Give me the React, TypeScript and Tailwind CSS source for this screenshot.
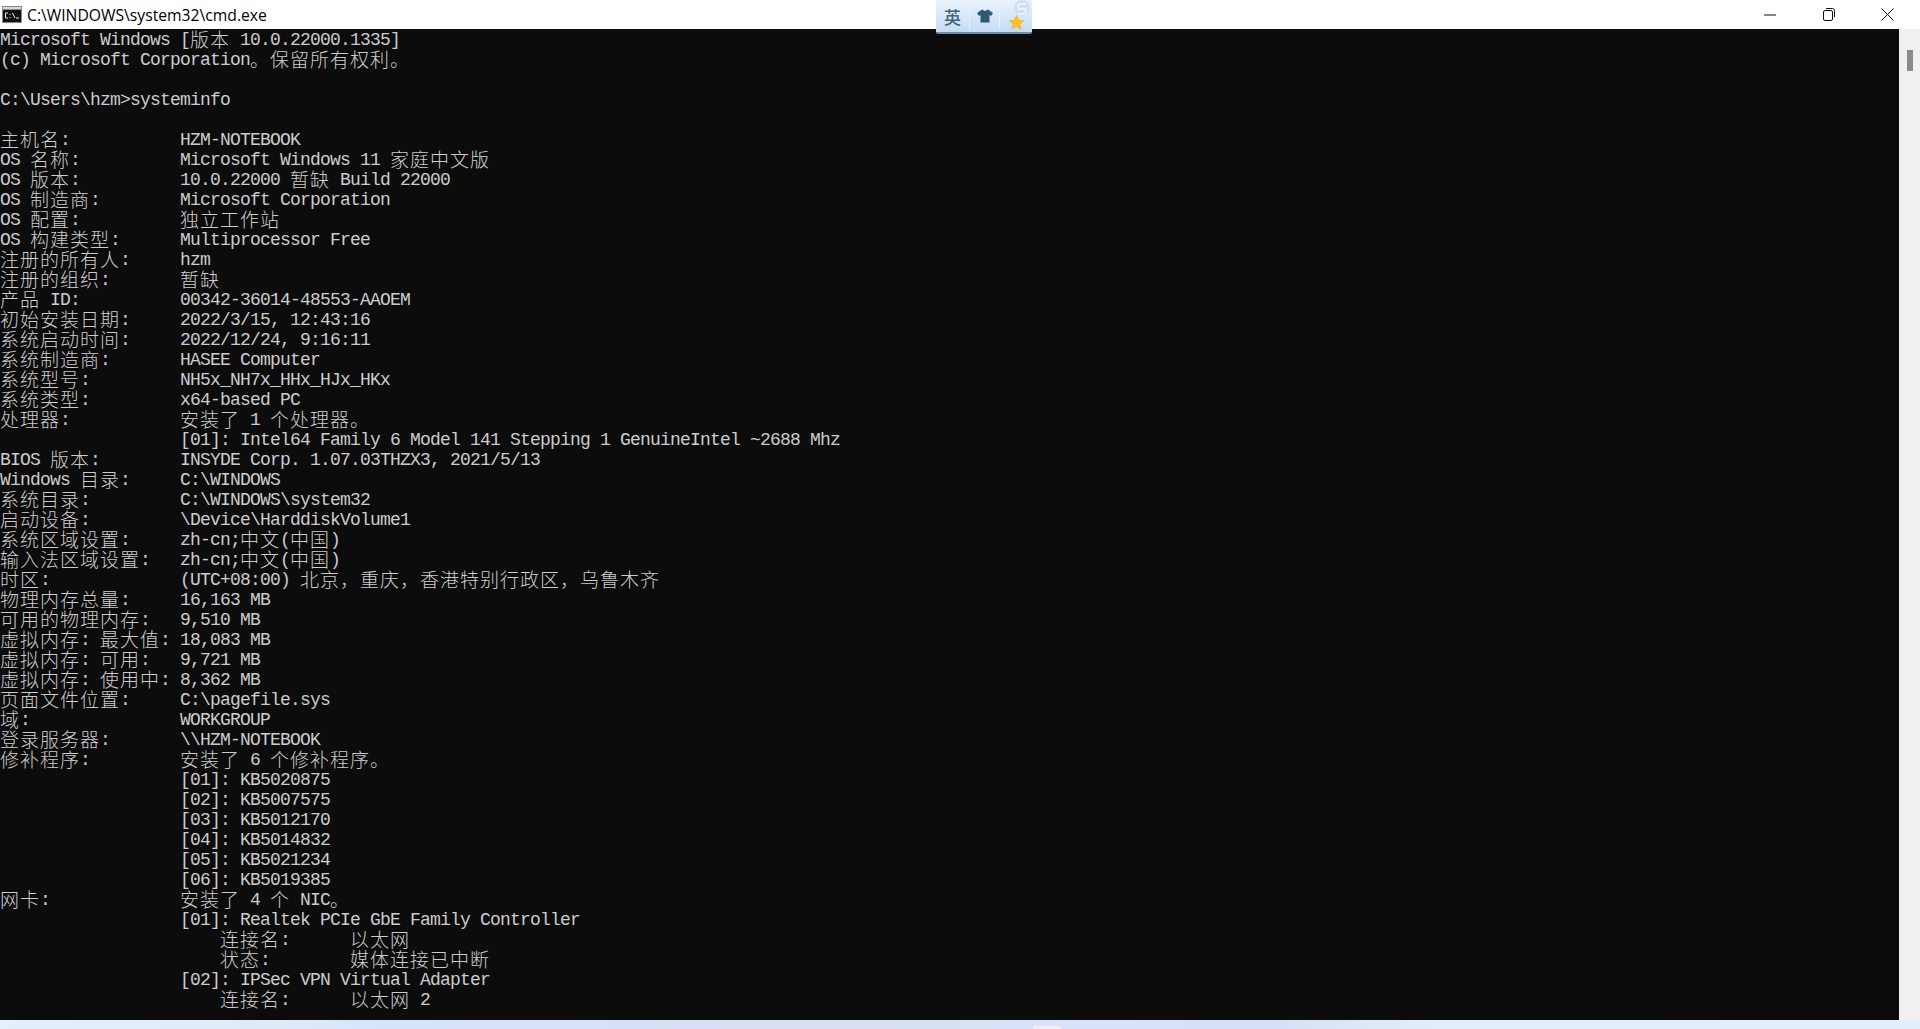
import React from "react";

const MONO = "inline-block h-5 pt-px align-top font-['Liberation_Mono','Courier_New',monospace] text-[18px] leading-5 tracking-[-0.8px]";
const CJK = "inline-block h-5 align-top font-['Noto_Sans_CJK_SC',sans-serif] text-[19px] font-light leading-[19px] tracking-[1px]";

function Term({ text }: { text: string }) {
  const parts = text.split(/([\u3000-\u303f\u4e00-\u9fff\uff00-\uffef]+)/);
  return (
    <>
      {parts.map((p, i) =>
        i % 2 === 1 ? (
          <span key={i} className={CJK}>{p}</span>
        ) : (
          <span key={i} className={MONO}>{p}</span>
        )
      )}
    </>
  );
}

function Line({ text }: { text: string }) {
  return <div className="h-5 whitespace-pre leading-5"><Term text={text} /></div>;
}

function Row({ label, value }: { label?: string; value: string }) {
  return (
    <div className="grid h-5 grid-cols-[180px_1fr] whitespace-pre leading-5">
      <div className="h-5">{label ? <Term text={label} /> : null}</div>
      <div className="h-5"><Term text={value} /></div>
    </div>
  );
}

const rows: [string, string][] = [
  ["主机名:", "HZM-NOTEBOOK"],
  ["OS 名称:", "Microsoft Windows 11 家庭中文版"],
  ["OS 版本:", "10.0.22000 暂缺 Build 22000"],
  ["OS 制造商:", "Microsoft Corporation"],
  ["OS 配置:", "独立工作站"],
  ["OS 构建类型:", "Multiprocessor Free"],
  ["注册的所有人:", "hzm"],
  ["注册的组织:", "暂缺"],
  ["产品 ID:", "00342-36014-48553-AAOEM"],
  ["初始安装日期:", "2022/3/15, 12:43:16"],
  ["系统启动时间:", "2022/12/24, 9:16:11"],
  ["系统制造商:", "HASEE Computer"],
  ["系统型号:", "NH5x_NH7x_HHx_HJx_HKx"],
  ["系统类型:", "x64-based PC"],
  ["处理器:", "安装了 1 个处理器。"],
  ["", "[01]: Intel64 Family 6 Model 141 Stepping 1 GenuineIntel ~2688 Mhz"],
  ["BIOS 版本:", "INSYDE Corp. 1.07.03THZX3, 2021/5/13"],
  ["Windows 目录:", "C:\\WINDOWS"],
  ["系统目录:", "C:\\WINDOWS\\system32"],
  ["启动设备:", "\\Device\\HarddiskVolume1"],
  ["系统区域设置:", "zh-cn;中文(中国)"],
  ["输入法区域设置:", "zh-cn;中文(中国)"],
  ["时区:", "(UTC+08:00) 北京，重庆，香港特别行政区，乌鲁木齐"],
  ["物理内存总量:", "16,163 MB"],
  ["可用的物理内存:", "9,510 MB"],
  ["虚拟内存: 最大值:", "18,083 MB"],
  ["虚拟内存: 可用:", "9,721 MB"],
  ["虚拟内存: 使用中:", "8,362 MB"],
  ["页面文件位置:", "C:\\pagefile.sys"],
  ["域:", "WORKGROUP"],
  ["登录服务器:", "\\\\HZM-NOTEBOOK"],
  ["修补程序:", "安装了 6 个修补程序。"],
  ["", "[01]: KB5020875"],
  ["", "[02]: KB5007575"],
  ["", "[03]: KB5012170"],
  ["", "[04]: KB5014832"],
  ["", "[05]: KB5021234"],
  ["", "[06]: KB5019385"],
  ["网卡:", "安装了 4 个 NIC。"],
  ["", "[01]: Realtek PCIe GbE Family Controller"],
  ["", "    连接名:      以太网"],
  ["", "    状态:        媒体连接已中断"],
  ["", "[02]: IPSec VPN Virtual Adapter"],
  ["", "    连接名:      以太网 2"],
];

function CmdIcon() {
  return (
    <svg width="20" height="17" viewBox="0 0 20 17" className="mr-[5px] shrink-0">
      <rect x="0" y="0" width="20" height="17" fill="#8a8a8a" />
      <rect x="1" y="4" width="18" height="12" fill="#111" />
      <rect x="1" y="1" width="18" height="2" fill="#d8d8d8" />
      <path d="M6 7H3.5V12H6M8 8v1M8 11v1M10.5 7L13 12M14 12H17" stroke="#e8e8e8" strokeWidth="1" fill="none" />
    </svg>
  );
}

function ImeBar() {
  return (
    <div className="absolute left-[936px] top-0 flex h-[34px] w-[96px] items-center rounded-b-[2px] border-b-2 border-[#6f8ea8] bg-gradient-to-b from-[#eaf3fc] to-[#c5dcf3] font-['Noto_Sans_CJK_SC',sans-serif]">
      <span className="flex h-full w-[33px] items-center justify-center text-[17px] font-medium leading-none text-[#44667d]">英</span>
      <span className="h-[26px] w-px bg-[#e8f1fa]" />
      <span className="flex h-full w-[29px] items-center justify-center">
        <svg width="16" height="14" viewBox="0 0 16 14">
          <path d="M5 0.5L8 2L11 0.5L16 4L14 7L12.5 6V13.5H3.5V6L2 7L0 4Z" fill="#2f5a73" />
        </svg>
      </span>
      <span className="h-[26px] w-px bg-[#e8f1fa]" />
      <span className="relative flex h-full flex-1 items-center justify-center">
        <svg width="20" height="20" viewBox="0 0 20 20" className="absolute right-0 top-0" fill="none">
          <circle cx="10" cy="8" r="8" fill="#cfe0f3" />
          <path d="M14 4H8Q6 4 6 6.5T8 9H12Q14 9 14 11T12 14H6" stroke="#eaf3fc" strokeWidth="2" />
        </svg>
        <svg width="15" height="15" viewBox="0 0 14 14" className="relative mt-3">
          <path d="M7 0.5L9 5L13.7 5.3L10 8.4L11.3 13.2L7 10.6L2.7 13.2L4 8.4L0.3 5.3L5 5Z" fill="#fdc41f" stroke="#f3a712" strokeWidth="0.6" />
        </svg>
      </span>
    </div>
  );
}

export default function App() {
  return (
    <div className="relative flex h-[1029px] w-[1920px] flex-col overflow-hidden bg-white">
      <header className="flex h-[29px] shrink-0 items-center bg-white pl-[2px]">
        <CmdIcon />
        <span className="font-['Open_Sans',sans-serif] text-[15.7px] leading-[22px] text-black">C:\WINDOWS\system32\cmd.exe</span>
        <div className="ml-auto mr-[3px] flex h-full items-center">
          <button className="flex h-full w-[59px] items-center justify-center">
            <svg width="12" height="2" viewBox="0 0 12 2"><path d="M0 1H12" stroke="#111" strokeWidth="1" /></svg>
          </button>
          <button className="flex h-full w-[59px] items-center justify-center">
            <svg width="12" height="13" viewBox="0 0 12 13" fill="none" stroke="#111" strokeWidth="1">
              <rect x="0.5" y="2.5" width="9" height="10" rx="1.5" />
              <path d="M3 0.5H9.5A2 2 0 0 1 11.5 2.5V9" />
            </svg>
          </button>
          <button className="flex h-full w-[59px] items-center justify-center">
            <svg width="13" height="13" viewBox="0 0 13 13"><path d="M0.5 0.5L12.5 12.5M12.5 0.5L0.5 12.5" stroke="#111" strokeWidth="1" /></svg>
          </button>
        </div>
      </header>
      <ImeBar />
      <main className="flex h-[991px] shrink-0">
        <div className="h-full w-[1899px] overflow-hidden bg-[#0c0c0c] text-[#cccccc]">
          <Line text="Microsoft Windows [版本 10.0.22000.1335]" />
          <Line text="(c) Microsoft Corporation。保留所有权利。" />
          <div className="h-5" />
          <Line text="C:\Users\hzm>systeminfo" />
          <div className="h-5" />
          {rows.map((r, i) => (
            <Row key={i} label={r[0]} value={r[1]} />
          ))}
        </div>
        <div className="flex-1 bg-[#f0f0f0] pt-[21px]">
          <div className="mx-auto h-[21px] w-[6px] bg-[#8b8b8b]" />
        </div>
      </main>
      <footer className="relative h-[9px] flex-1 bg-[linear-gradient(90deg,#e6f0fb_0%,#dfeafa_15%,#d6e3fb_20%,#d9dff5_40%,#d8e2f8_58%,#d6dff6_66%,#e3eefa_75%,#e3effa_100%)]">
        <div className="absolute left-[1033px] top-[6px] h-[3px] w-[28px] rounded-t-[2px] bg-[#eef0f8]" />
      </footer>
    </div>
  );
}
